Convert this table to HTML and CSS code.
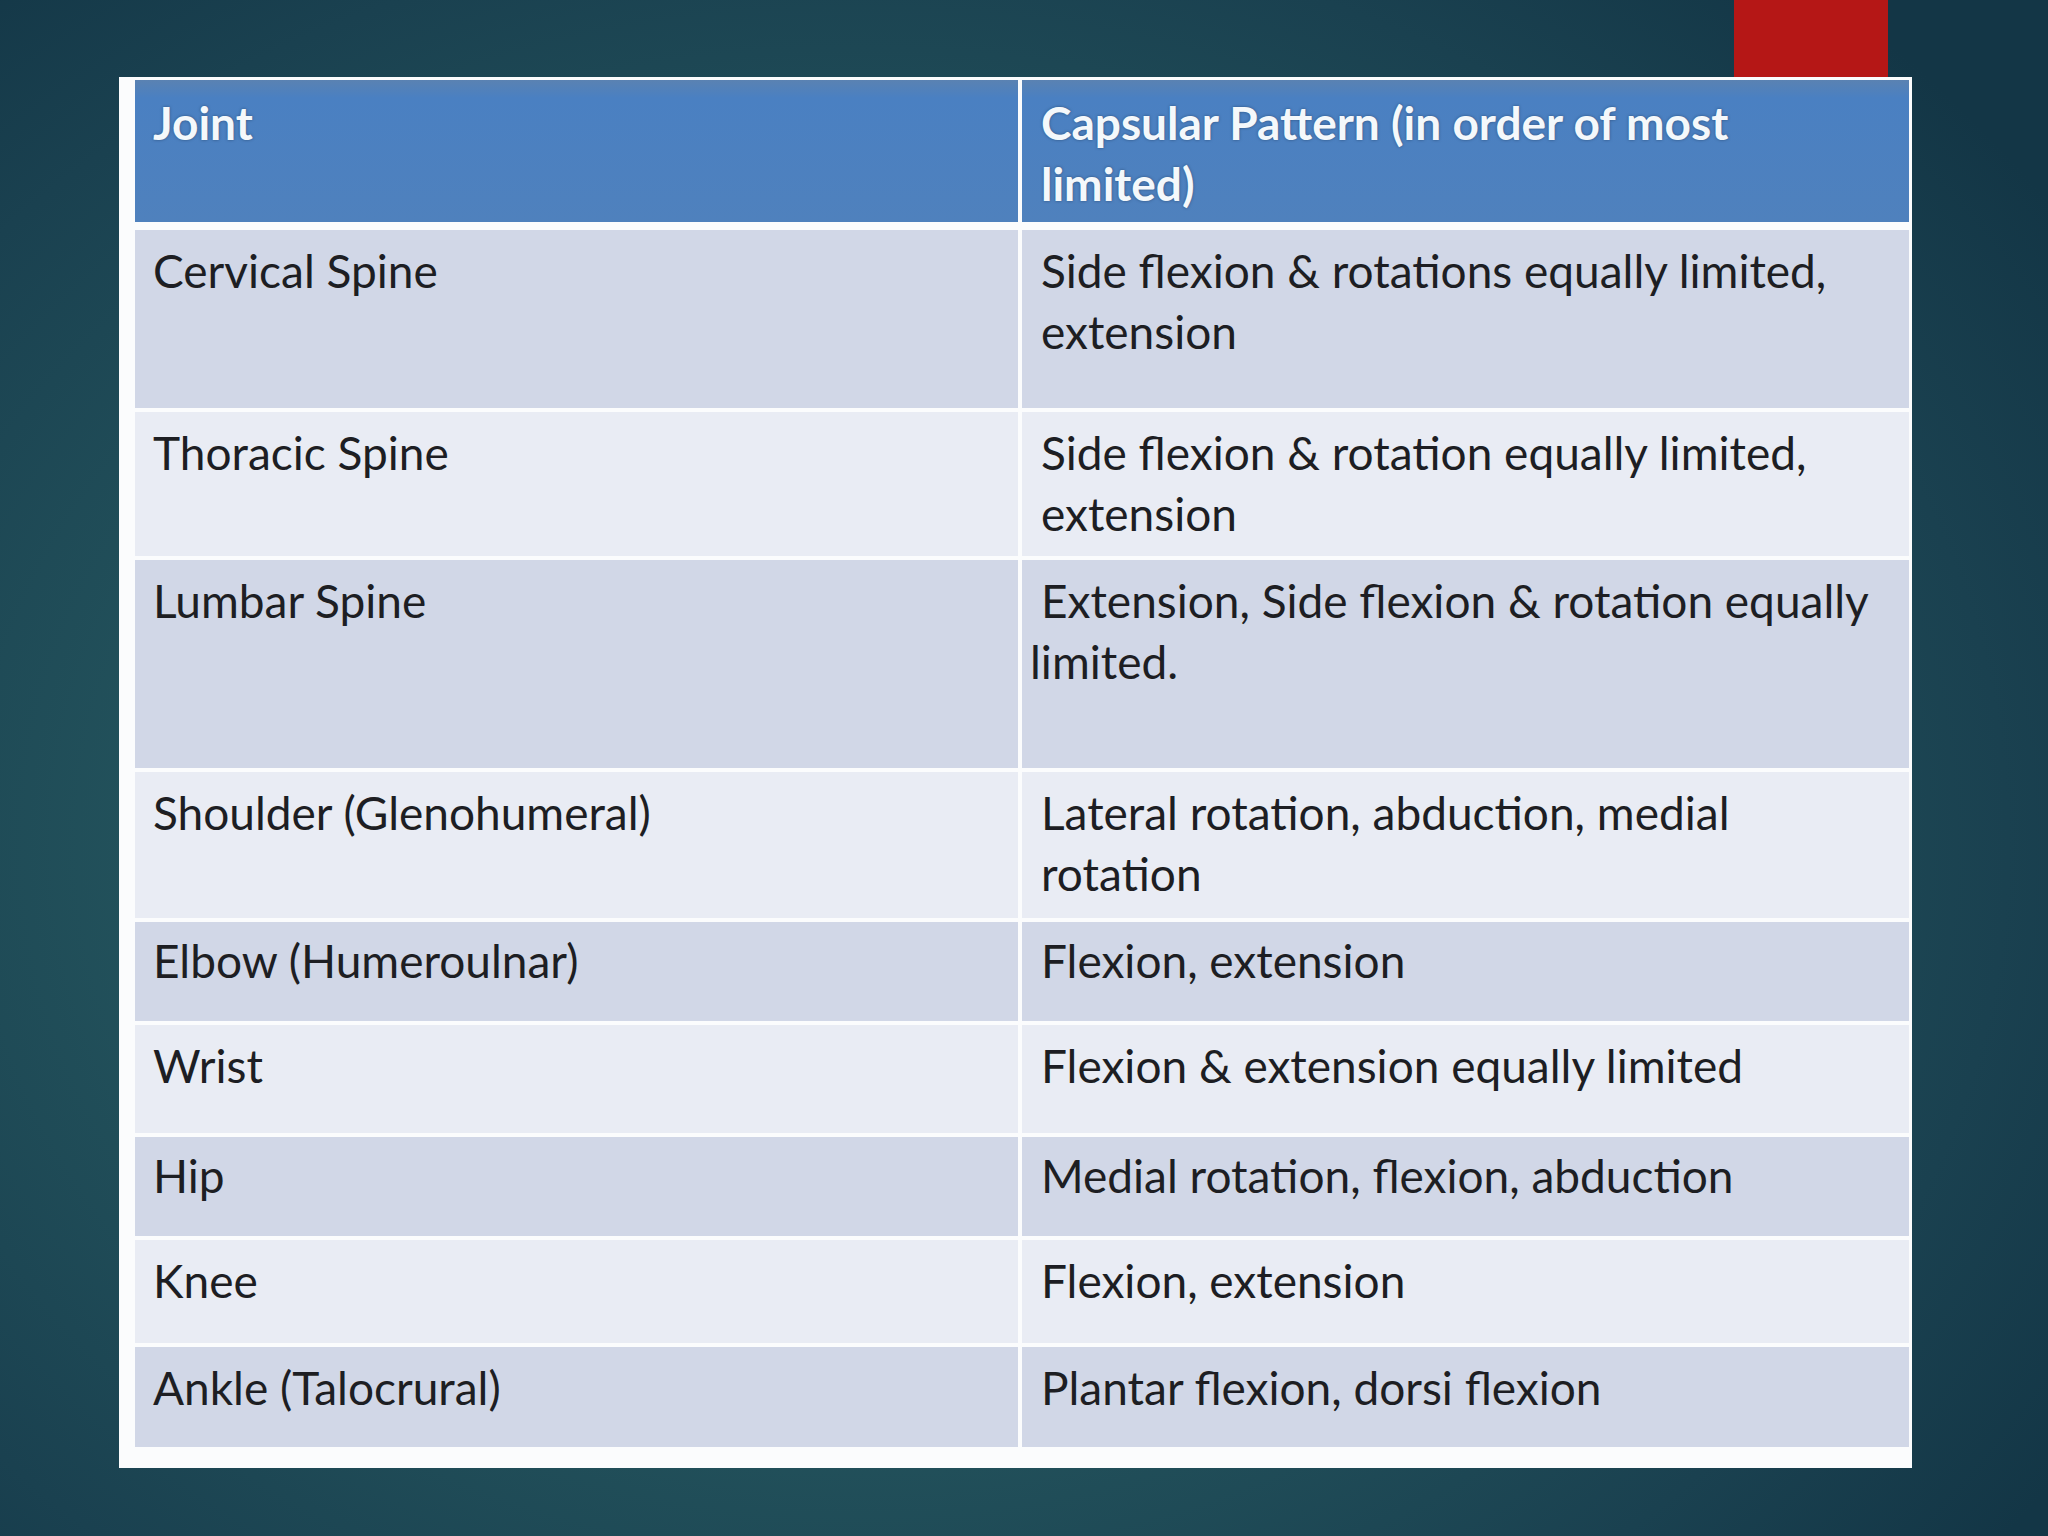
FILE: index.html
```html
<!DOCTYPE html>
<html lang="en">
<head>
<meta charset="utf-8">
<title>Capsular Patterns</title>
<link rel="stylesheet" href="styles.css">
</head>
<body>
<div class="slide">
  <div class="topbar"><div class="accent"></div></div>
  <div class="frame">
    <div class="table">
      <div class="cell head">Joint</div>
      <div class="cell head col2">Capsular Pattern (in order of most<br>limited)</div>

      <div class="cell dark">Cervical Spine</div>
      <div class="cell dark col2">Side flexion &amp; rotations equally limited,<br>extension</div>

      <div class="cell light">Thoracic Spine</div>
      <div class="cell light col2">Side flexion &amp; rotation equally limited,<br>extension</div>

      <div class="cell dark">Lumbar Spine</div>
      <div class="cell dark col2 indent">Extension, Side flexion &amp; rotation equally<br>limited.</div>

      <div class="cell light">Shoulder (Glenohumeral)</div>
      <div class="cell light col2">Lateral rotation, abduction, medial<br>rotation</div>

      <div class="cell dark tight">Elbow (Humeroulnar)</div>
      <div class="cell dark col2 tight">Flexion, extension</div>

      <div class="cell light">Wrist</div>
      <div class="cell light col2">Flexion &amp; extension equally limited</div>

      <div class="cell dark tight">Hip</div>
      <div class="cell dark col2 tight">Medial rotation, flexion, abduction</div>

      <div class="cell light">Knee</div>
      <div class="cell light col2">Flexion, extension</div>

      <div class="cell dark">Ankle (Talocrural)</div>
      <div class="cell dark col2">Plantar flexion, dorsi flexion</div>
    </div>
  </div>
</div>
</body>
</html>
```

FILE: styles.css
```css
html, body {
  margin: 0;
  padding: 0;
}

body {
  width: 2048px;
  height: 1536px;
  overflow: hidden;
  font-family: Lato, "Liberation Sans", sans-serif;
}

.slide {
  width: 2048px;
  height: 1536px;
  background:
    radial-gradient(ellipse 70% 75% at 42% 55%, #2b6166 0%, #25575f 40%, #1a4150 80%, #133646 100%);
}

.topbar {
  height: 77px;
  display: flex;
}

.accent {
  margin-left: 1734px;
  width: 154px;
  height: 77px;
  background: #b51716;
}

.frame {
  margin-left: 119px;
  width: 1774px;
  padding: 3px 3px 21px 16px;
  background: #fbfcfd;
}

.table {
  display: grid;
  grid-template-columns: 883px 887px;
  grid-template-rows: 146px 178px 144px 208px 146px 99px 108px 99px 103px 100px;
  column-gap: 4px;
  row-gap: 4px;
}

.cell {
  font-size: 46px;
  line-height: 61px;
  color: #1d1e23;
  padding: 10px 10px 0 18px;
  white-space: nowrap;
}

.col2 {
  padding-left: 19px;
}

.indent {
  padding-left: 8px;
  text-indent: 11px;
}

.tight {
  padding-top: 8px;
}

.head {
  margin-bottom: 4px;
  padding-top: 12px;
  font-weight: 700;
  color: #f4f8fb;
  text-shadow: 0 0 3px rgba(20, 40, 70, 0.55);
  background: linear-gradient(180deg, #5a82b2 0px, #4a80c2 18px, #4f81bd 100%);
}

.dark {
  background: #d1d7e7;
}

.light {
  background: #e9ecf4;
}
```
